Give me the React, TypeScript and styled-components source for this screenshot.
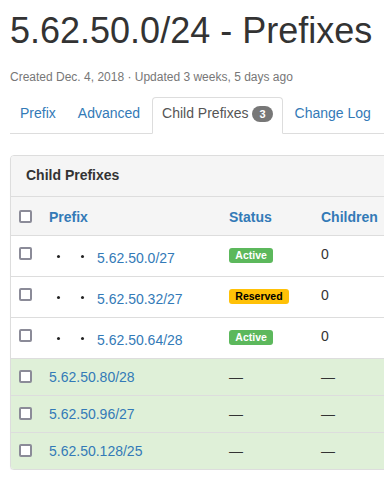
import styled, { createGlobalStyle } from 'styled-components'

const GlobalStyle = createGlobalStyle`
  html, body {
    margin: 0;
    padding: 0;
    overflow: hidden;
    background: #fff;
  }
  body {
    font-family: "Liberation Sans", Arial, Helvetica, sans-serif;
    font-size: 14px;
    line-height: 20px;
    color: #333;
  }
`

const Page = styled.div`
  width: 720px;
  padding: 0 10px;
`

const Title = styled.h1`
  margin: 11px 0 0;
  font-size: 36px;
  font-weight: 400;
  line-height: 39.6px;
  color: #333;
`

const Meta = styled.div`
  margin-top: 16px;
  font-size: 12px;
  line-height: 20px;
  color: #777;
`

const Tabs = styled.ul`
  display: flex;
  margin: 10px 0 0;
  padding: 0;
  list-style: none;
  border-bottom: 1px solid #ddd;
`

const Tab = styled.li<{ $active?: boolean }>`
  display: flex;
  align-items: baseline;
  margin: 0 2px -1px 0;
  padding: 5px 9px 10px;
  border: 1px solid ${(p) => (p.$active ? '#ddd' : 'transparent')};
  border-bottom-color: ${(p) => (p.$active ? '#fff' : 'transparent')};
  border-radius: 4px 4px 0 0;
  background: ${(p) => (p.$active ? '#fff' : 'transparent')};
  color: ${(p) => (p.$active ? '#555' : '#337ab7')};
  white-space: nowrap;
`

const Badge = styled.span`
  display: inline-block;
  margin-left: 4px;
  padding: 2px 7px;
  border-radius: 10px;
  background: #777;
  color: #fff;
  font-size: 11px;
  font-weight: bold;
  line-height: 12px;
`

const Panel = styled.div`
  margin-top: 21px;
  border: 1px solid #ddd;
  border-radius: 4px;
  background: #fff;
  box-shadow: 0 1px 1px rgba(0, 0, 0, 0.05);
  overflow: hidden;
`

const PanelHeading = styled.div`
  padding: 9px 15px 11px;
  background: #f5f5f5;
  border-bottom: 1px solid #ddd;
  font-weight: bold;
`

const Table = styled.table`
  width: 100%;
  border-collapse: collapse;
  table-layout: fixed;
`

const HeadCell = styled.th`
  padding: 10px 8px 8px;
  background: #f5f5f5;
  border-bottom: 1px solid #ddd;
  color: #337ab7;
  font-weight: bold;
  text-align: left;
  white-space: nowrap;
`

const Row = styled.tr<{ $available?: boolean }>`
  background: ${(p) => (p.$available ? '#dff0d8' : '#fff')};
  border-bottom: 1px solid #ddd;

  &:last-child {
    border-bottom: none;
  }
`

const Cell = styled.td<{ $tree?: boolean }>`
  padding: ${(p) => (p.$tree ? '8px 8px 12px' : '8px')};
  vertical-align: top;
  white-space: nowrap;
`

const Checkbox = styled.span`
  display: inline-block;
  box-sizing: border-box;
  width: 13px;
  height: 13px;
  vertical-align: -1px;
  border: 2px solid #8b8b98;
  border-radius: 2px;
  background: #fff;
`

const PrefixLine = styled.div<{ $tree?: boolean }>`
  display: flex;
  align-items: flex-start;
  padding-top: ${(p) => (p.$tree ? '4px' : '0')};
`

const DepthDot = styled.span`
  flex: none;
  width: 3px;
  height: 3px;
  margin: 7px 13px 0 8px;
  border-radius: 50%;
  background: #222;
`

const Link = styled.a`
  color: #337ab7;
  text-decoration: none;
`

const Label = styled.span<{ $kind: 'active' | 'reserved' }>`
  display: inline-block;
  padding: 2.1px 6.3px 3.15px;
  border-radius: 3px;
  font-size: 10.5px;
  font-weight: bold;
  line-height: 10.5px;
  background: ${(p) => (p.$kind === 'active' ? '#5cb85c' : '#ffc107')};
  color: ${(p) => (p.$kind === 'active' ? '#fff' : '#000')};
`

type Prefix = {
  prefix: string
  depth: number
  status?: 'active' | 'reserved'
  children?: number
}

const prefixes: Prefix[] = [
  { prefix: '5.62.50.0/27', depth: 2, status: 'active', children: 0 },
  { prefix: '5.62.50.32/27', depth: 2, status: 'reserved', children: 0 },
  { prefix: '5.62.50.64/28', depth: 2, status: 'active', children: 0 },
  { prefix: '5.62.50.80/28', depth: 0 },
  { prefix: '5.62.50.96/27', depth: 0 },
  { prefix: '5.62.50.128/25', depth: 0 },
]

const statusText = { active: 'Active', reserved: 'Reserved' }

export default function App() {
  return (
    <>
      <GlobalStyle />
      <Page>
        <Title>5.62.50.0/24 - Prefixes</Title>
        <Meta>Created Dec. 4, 2018 · Updated 3 weeks, 5 days ago</Meta>
        <Tabs>
          <Tab>Prefix</Tab>
          <Tab>Advanced</Tab>
          <Tab $active>
            Child Prefixes <Badge>3</Badge>
          </Tab>
          <Tab>Change Log</Tab>
        </Tabs>
        <Panel>
          <PanelHeading>Child Prefixes</PanelHeading>
          <Table>
            <colgroup>
              <col style={{ width: 30 }} />
              <col style={{ width: 180 }} />
              <col style={{ width: 92 }} />
              <col />
            </colgroup>
            <thead>
              <tr>
                <HeadCell>
                  <Checkbox />
                </HeadCell>
                <HeadCell>Prefix</HeadCell>
                <HeadCell>Status</HeadCell>
                <HeadCell>Children</HeadCell>
              </tr>
            </thead>
            <tbody>
              {prefixes.map((p) => {
                const tree = p.depth > 0
                return (
                  <Row key={p.prefix} $available={!p.status}>
                    <Cell $tree={tree}>
                      <Checkbox />
                    </Cell>
                    <Cell $tree={false}>
                      <PrefixLine $tree={tree}>
                        {Array.from({ length: p.depth }).map((_, i) => (
                          <DepthDot key={i} />
                        ))}
                        <Link>{p.prefix}</Link>
                      </PrefixLine>
                    </Cell>
                    <Cell $tree={tree}>
                      {p.status ? <Label $kind={p.status}>{statusText[p.status]}</Label> : '—'}
                    </Cell>
                    <Cell $tree={tree}>{p.status ? p.children : '—'}</Cell>
                  </Row>
                )
              })}
            </tbody>
          </Table>
        </Panel>
      </Page>
    </>
  )
}
